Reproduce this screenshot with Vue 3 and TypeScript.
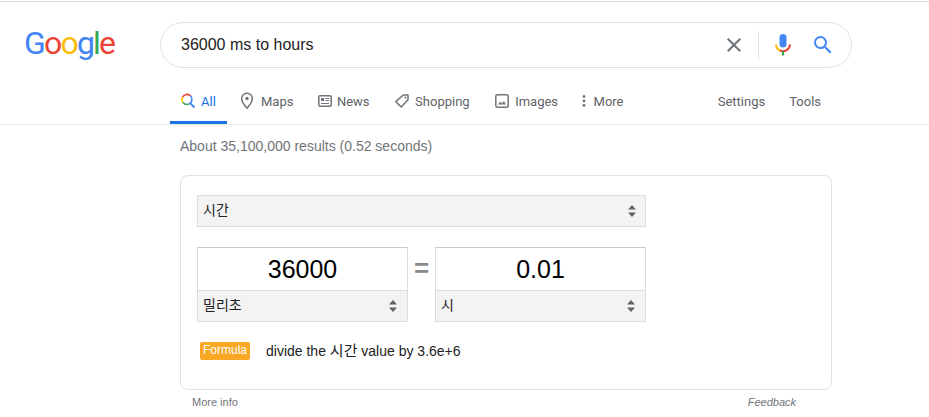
<script setup lang="ts">
const arrows = 'M4 0 L8 4.5 H0 Z M0 7.5 H8 L4 12 Z';
</script>

<template>
  <div class="page">
    <header class="top">
      <div class="logo" aria-label="Google"><span class="b">G</span><span class="r">o</span><span class="y">o</span><span class="b">g</span><span class="g">l</span><span class="r">e</span></div>
      <div class="search">
        <span class="query">36000 ms to hours</span>
        <svg class="x" width="24" height="24" viewBox="0 0 24 24"><path fill="#70757a" d="M19 6.41 17.59 5 12 10.59 6.41 5 5 6.41 10.59 12 5 17.59 6.41 19 12 13.41 17.59 19 19 17.59 13.41 12z"/></svg>
        <span class="sep"></span>
        <svg class="mic" width="18" height="24" viewBox="0 0 18 24">
          <rect x="5.5" y="1" width="7" height="13.5" rx="3.5" fill="#4285f4"/>
          <path d="M2 11.5 A7 7 0 0 0 6 17.5" fill="none" stroke="#fbbc05" stroke-width="2"/>
          <path d="M6 17.5 A7 7 0 0 0 16 11.5" fill="none" stroke="#ea4335" stroke-width="2"/>
          <rect x="8" y="18" width="2" height="4.5" fill="#34a853"/>
        </svg>
        <svg class="lens" width="24" height="24" viewBox="0 0 24 24"><path fill="#4285f4" d="M15.5 14h-.79l-.28-.27A6.47 6.47 0 0 0 16 9.5 6.5 6.5 0 1 0 9.5 16c1.61 0 3.09-.59 4.23-1.57l.27.28v.79l5 4.99L20.49 19l-4.99-5zm-6 0C7.01 14 5 11.99 5 9.5S7.01 5 9.5 5 14 7.01 14 9.5 11.99 14 9.5 14z"/></svg>
      </div>
    </header>

    <nav class="tabs">
      <a class="tab active">
        <svg width="16" height="16" viewBox="0 0 16 16" fill="none" stroke-width="1.6">
          <path d="M10.6 2.9 A5 5 0 0 0 2.6 4" stroke="#ea4335"/>
          <path d="M2.6 4 A5 5 0 0 0 3 9.5" stroke="#fbbc05"/>
          <path d="M3 9.5 A5 5 0 0 0 9.5 10.6" stroke="#34a853"/>
          <path d="M9.5 10.6 A5 5 0 0 0 10.6 2.9" stroke="#4285f4"/>
          <path d="M10 10 L14.5 14.5" stroke="#4285f4" stroke-width="1.8"/>
        </svg>
        All
      </a>
      <a class="tab tab-maps">
        <svg width="16" height="18" viewBox="0 0 16 18"><path fill="none" stroke="#70757a" stroke-width="1.5" d="M8 1.2a5.3 5.3 0 0 0-5.3 5.3C2.700 10.400 8 16.200 8 16.200s5.300-5.800 5.300-9.700A5.300 5.300 0 0 0 8 1.200z"/><circle cx="8" cy="6.500" r="1.700" fill="#70757a"/></svg>
        Maps
      </a>
      <a class="tab">
        <svg width="14" height="14" viewBox="0 0 14 14"><rect x="0.800" y="1.800" width="12.400" height="10.400" rx="1.200" fill="none" stroke="#70757a" stroke-width="1.500"/><rect x="3" y="4" width="3" height="3" fill="#70757a"/><path d="M7.500 4.500H11M7.500 6.500H11M3 9.500H11" stroke="#70757a" stroke-width="1.200"/></svg>
        News
      </a>
      <a class="tab">
        <svg width="16" height="16" viewBox="0 0 16 16"><path fill="none" stroke="#70757a" stroke-width="1.500" stroke-linejoin="round" d="M9.200 2H14v4.800L7.200 14 1.800 8.600z"/><circle cx="11.500" cy="4.500" r="1" fill="#70757a"/></svg>
        Shopping
      </a>
      <a class="tab tab-images">
        <svg width="14" height="14" viewBox="0 0 14 14"><rect x="0.800" y="0.800" width="12.400" height="12.400" rx="1.500" fill="none" stroke="#70757a" stroke-width="1.500"/><path fill="#70757a" d="M3 10.500 5.300 7.500 7 9.500 8.800 7 11 10.500z"/></svg>
        Images
      </a>
      <a class="tab tab-more">
        <svg width="4" height="14" viewBox="0 0 4 14"><circle cx="2" cy="2.500" r="1.400" fill="#70757a"/><circle cx="2" cy="7" r="1.400" fill="#70757a"/><circle cx="2" cy="11.500" r="1.400" fill="#70757a"/></svg>
        More
      </a>
      <span class="spacer"></span>
      <a class="tab plain">Settings</a>
      <a class="tab plain">Tools</a>
    </nav>

    <main class="main">
      <p class="stats">About 35,100,000 results (0.52 seconds)</p>
      <section class="card">
        <div class="select wide">
          <span>시간</span>
          <svg width="8" height="12" viewBox="0 0 8 12"><path :d="arrows" fill="#5f6368"/></svg>
        </div>
        <div class="converter">
          <div class="unit">
            <div class="value">36000</div>
            <div class="select inner">
              <span>밀리초</span>
              <svg width="8" height="12" viewBox="0 0 8 12"><path :d="arrows" fill="#5f6368"/></svg>
            </div>
          </div>
          <div class="equals">=</div>
          <div class="unit">
            <div class="value">0.01</div>
            <div class="select inner">
              <span>시</span>
              <svg width="8" height="12" viewBox="0 0 8 12"><path :d="arrows" fill="#5f6368"/></svg>
            </div>
          </div>
        </div>
        <div class="formula">
          <span class="badge">Formula</span>
          <span class="ftext">divide the <span class="ko">시간</span> value by 3.6e+6</span>
        </div>
      </section>
      <footer class="foot">
        <span>More info</span>
        <em>Feedback</em>
      </footer>
    </main>
  </div>
</template>

<style>
html, body { margin: 0; background: #fff; }
</style>

<style scoped>
.page {
  width: 929px;
  height: 417px;
  overflow: hidden;
  box-sizing: border-box;
  font-family: "Liberation Sans", Arial, "Noto Sans CJK KR", sans-serif;
  border-top: 1px solid transparent;
}
.top {
  border-top: 1px solid #dadce0;
  display: flex;
  align-items: flex-start;
  height: 74px;
  padding-top: 20px;
  box-sizing: border-box;
}
.logo {
  flex: none;
  width: 136px;
  padding-left: 24px;
  font-family: Roboto, sans-serif;
  font-weight: 400;
  font-size: 32px;
  line-height: 42px;
  letter-spacing: -1.8px;
  white-space: nowrap;
}
.b { color: #4285f4; }
.r { color: #ea4335; }
.y { color: #fbbc05; }
.g { color: #34a853; }
.search {
  box-sizing: border-box;
  width: 692px;
  height: 46px;
  border: 1px solid #dfe1e5;
  border-radius: 23px;
  display: flex;
  align-items: center;
  padding-left: 20px;
  padding-right: 17px;
}
.query {
  flex: 1;
  font-size: 16px;
  color: #222;
}
.x { margin-right: 12px; }
.sep {
  width: 1px;
  height: 28px;
  background: #dfe1e5;
  margin-right: 15px;
}
.mic { margin-right: 19px; }
.lens { margin-right: -1px; }
.tabs {
  display: flex;
  align-items: flex-start;
  height: 50px;
  box-sizing: border-box;
  padding-left: 170px;
  padding-right: 108px;
  border-bottom: 1px solid #ebebeb;
  font-family: Roboto, "Liberation Sans", sans-serif;
  font-size: 13px;
}
.tab {
  display: flex;
  align-items: center;
  gap: 5px;
  height: 49px;
  padding: 3px 10px 0;
  box-sizing: border-box;
  color: #5f6368;
  margin-right: 4.5px;
}
.tab.active {
  color: #1a73e8;
  border-bottom: 3px solid #1a73e8;
  padding-top: 6px;
  width: 57px;
  margin-right: 3px;
}
.tab-maps { margin-left: -1px; gap: 6px; }
.tab-images { margin-left: 1px; gap: 6px; }
.tab-more { margin-left: -1px; gap: 8px; }
.tab.plain { margin: 0 0 0 24px; padding: 3px 0 0; }
.spacer { flex: 1; }
.main {
  padding-left: 180px;
  width: 652px;
}
.stats {
  margin: 0;
  height: 50px;
  padding-top: 13px;
  box-sizing: border-box;
  font-size: 14px;
  line-height: 16px;
  color: #70757a;
}
.card {
  box-sizing: border-box;
  height: 215px;
  width: 652px;
  border: 1px solid #dfe1e5;
  border-radius: 8px;
  padding: 19px 16px 0;
}
.select {
  display: flex;
  align-items: center;
  justify-content: space-between;
  box-sizing: border-box;
  background: #f3f3f3;
  font-size: 14px;
  color: #222;
  padding: 0 10px 0 5px;
}
.select span { position: relative; top: -2px; }
.wide {
  width: 449px;
  height: 32px;
  border: 1px solid #dcdcdc;
  padding-right: 9px;
}
.converter {
  display: flex;
  margin-top: 20px;
}
.unit {
  box-sizing: border-box;
  width: 211px;
  height: 75px;
  border: 1px solid #dcdcdc;
  border-top-color: #c8c8c8;
  border-radius: 1px;
  display: flex;
  flex-direction: column;
}
.value {
  height: 42px;
  line-height: 43px;
  text-align: center;
  font-size: 25px;
  color: #000;
  border-bottom: 1px solid #dcdcdc;
}
.inner { flex: 1; }
.equals {
  width: 27px;
  text-align: center;
  font-size: 26px;
  font-weight: bold;
  line-height: 42px;
  color: #8a8a8a;
}
.formula {
  display: flex;
  align-items: center;
  margin-top: 20px;
  padding-left: 3px;
  height: 18px;
}
.badge {
  box-sizing: border-box;
  width: 50px;
  height: 18px;
  background: #f9a825;
  border-radius: 2px;
  color: #fff;
  font-size: 12px;
  line-height: 16px;
  text-align: center;
}
.ftext {
  margin-left: 16px;
  font-size: 14px;
  color: #222;
  position: relative;
  top: -2px;
}
.ko { font-size: 15px; }
.foot {
  display: flex;
  justify-content: space-between;
  padding: 6px 36px 0 12px;
  font-size: 11px;
  line-height: 13px;
  color: #70757a;
}
</style>
